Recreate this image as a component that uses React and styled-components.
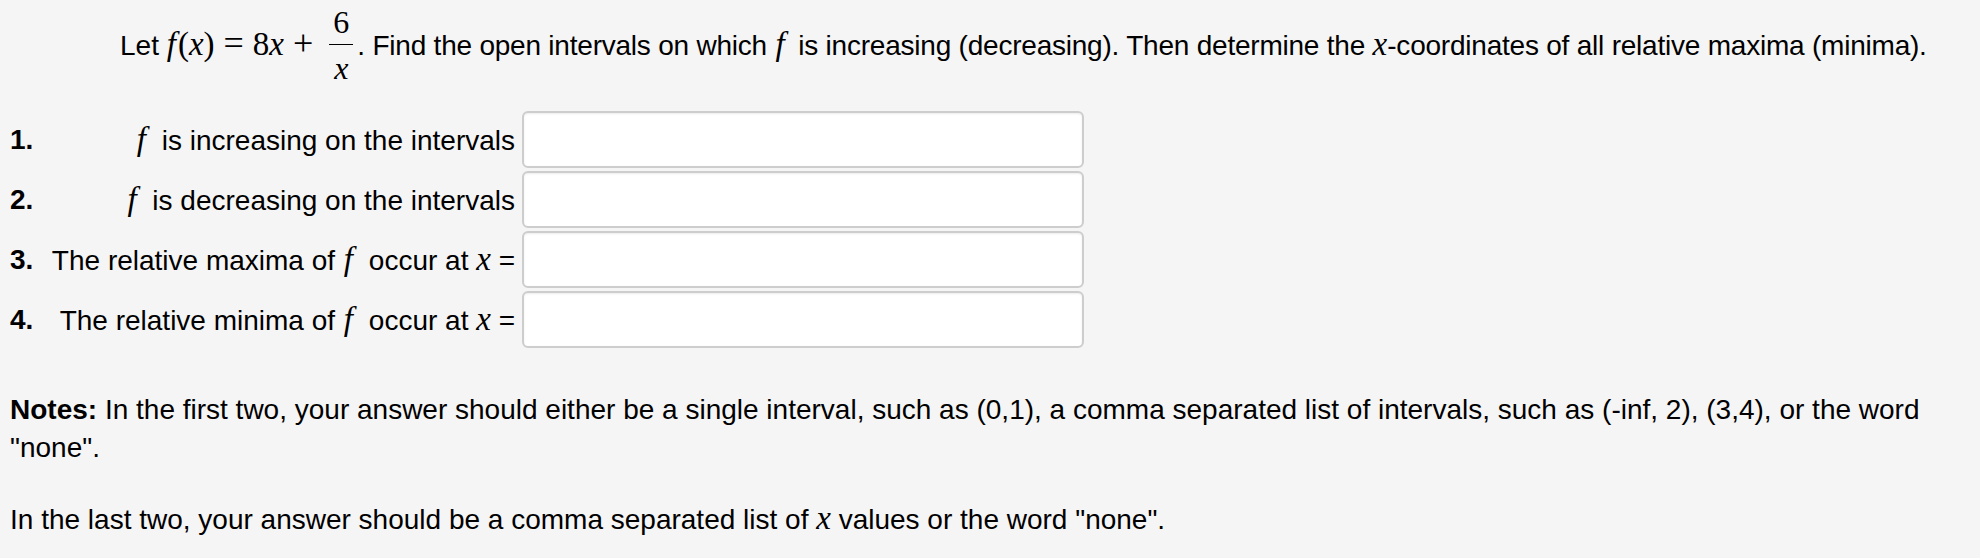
import React from "react";
import styled, { createGlobalStyle } from "styled-components";

const GlobalStyle = createGlobalStyle`
  html, body { margin: 0; padding: 0; background: #f5f5f5; }
  body {
    font-family: "Liberation Sans", Arial, Helvetica, sans-serif;
    font-size: 28px;
    color: #000;
  }
`;

const Page = styled.div`
  padding: 0 10px;
  background: #f5f5f5;
  min-height: 558px;
  box-sizing: border-box;
`;

const Intro = styled.p`
  margin: 0;
  padding: 6px 0 0 110px;
  line-height: 38px;
  white-space: nowrap;
`;

const IntroText = styled.span`
  letter-spacing: -0.22px;
`;

const MathVar = styled.span`
  font-family: "Liberation Serif", "DejaVu Serif", serif;
  font-style: italic;
  font-size: ${(p) => p.$size || 32}px;
  letter-spacing: 0;
  margin-right: ${(p) => p.$mr || 0}px;
  margin-left: ${(p) => p.$ml || 0}px;
`;

const MathNum = styled.span`
  font-family: "Liberation Serif", "DejaVu Serif", serif;
  font-size: 33px;
  margin-left: ${(p) => p.$ml || 0}px;
`;

const MathOp = styled.span`
  font-family: "Liberation Serif", "DejaVu Serif", serif;
  font-size: 36px;
  margin: 0 ${(p) => p.$space || 6}px;
`;

const Frac = styled.span`
  display: inline-flex;
  flex-direction: column;
  align-items: center;
  vertical-align: 22px;
  margin: 0 4px 0 7px;
  font-family: "Liberation Serif", "DejaVu Serif", serif;
  font-size: 32px;
  line-height: 1;
`;

const FracPart = styled.span`
  display: block;
  padding: 0 4px;
  font-style: ${(p) => (p.$italic ? "italic" : "normal")};
`;

const FracBar = styled.span`
  display: block;
  align-self: stretch;
  border-top: 1.5px solid #000;
  margin: 6px 0 7px;
`;

const Questions = styled.div`
  display: grid;
  grid-template-columns: 40px 458px 562px;
  column-gap: 7px;
  row-gap: 3px;
  align-items: center;
  margin-top: ${(p) => p.$top}px;
`;

const Num = styled.span`
  font-weight: bold;
`;

const Label = styled.span`
  justify-self: end;
  white-space: nowrap;
`;

const AnswerBox = styled.input`
  box-sizing: border-box;
  width: 562px;
  height: 57px;
  border: 2px solid #cdcdcd;
  border-radius: 6px;
  background: #fff;
  box-shadow: inset 0 1px 2px rgba(0, 0, 0, 0.08);
  outline: none;
  padding: 0 10px;
  font: inherit;
`;

const Note = styled.p`
  margin: ${(p) => p.$top}px 0 0;
  line-height: 38px;
`;

const F = ({ mr = 8 }) => <MathVar $size={33} $mr={mr} $ml={1}>f</MathVar>;
const X = () => <MathVar $size={33}>x</MathVar>;

const questions = [
  { n: "1.", label: <><F /> is increasing on the intervals</> },
  { n: "2.", label: <><F /> is decreasing on the intervals</> },
  { n: "3.", label: <>The relative maxima of <F /> occur at <X /> =</> },
  { n: "4.", label: <>The relative minima of <F /> occur at <X /> =</> },
];

export default function App() {
  return (
    <>
      <GlobalStyle />
      <Page>
        <Intro>
          Let <MathVar $size={33}>f</MathVar>
          <MathNum $ml={2}>(</MathNum>
          <MathVar $size={33}>x</MathVar>
          <MathNum>)</MathNum>
          <MathOp $space={9}>=</MathOp>
          <MathNum>8</MathNum>
          <MathVar $size={33}>x</MathVar>
          <MathOp $space={9}>+</MathOp>
          <Frac>
            <FracPart>6</FracPart>
            <FracBar />
            <FracPart $italic>x</FracPart>
          </Frac>
          <IntroText>
            . Find the open intervals on which <F mr={6} /> is increasing (decreasing). Then determine the <X />-coordinates of all relative maxima (minima).
          </IntroText>
        </Intro>
        <Questions $top={27}>
          {questions.map((q) => (
            <React.Fragment key={q.n}>
              <Num>{q.n}</Num>
              <Label>{q.label}</Label>
              <AnswerBox type="text" aria-label={`answer ${q.n}`} />
            </React.Fragment>
          ))}
        </Questions>
        <Note $top={43}>
          <b>Notes:</b> In the first two, your answer should either be a single interval, such as (0,1), a comma separated list of intervals, such as (-inf, 2), (3,4), or the word "none".
        </Note>
        <Note $top={32}>
          In the last two, your answer should be a comma separated list of <X /> values or the word "none".
        </Note>
      </Page>
    </>
  );
}
